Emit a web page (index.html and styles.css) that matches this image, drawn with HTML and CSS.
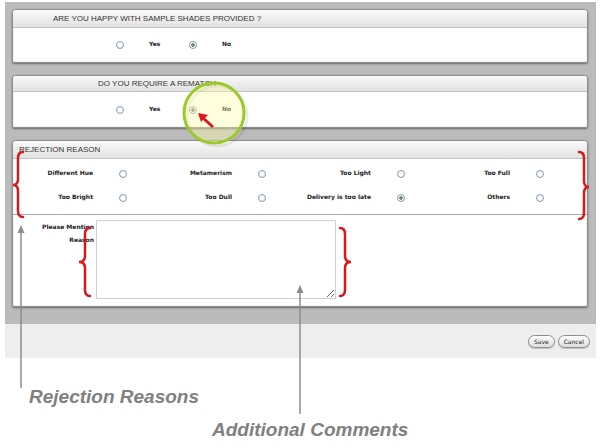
FILE: index.html
```html
<!DOCTYPE html>
<html lang="en">
<head>
  <meta charset="UTF-8"/>
  <title>Shade Approval</title>
  <link rel="stylesheet" href="styles.css">
</head>
<body>

  <div class="screen">
    <!-- SHADES QUESTION -->
    <div class="panel">
      <div class="panel-head"><span class="head-cell">ARE YOU HAPPY WITH SAMPLE SHADES PROVIDED ?</span></div>
      <div class="panel-body yesno">
        <label class="opt"><input type="radio" name="happy"><span>Yes</span></label>
        <label class="opt"><input type="radio" name="happy" checked><span>No</span></label>
      </div>
    </div>

    <!-- REMATCH QUESTION -->
    <div class="panel">
      <div class="panel-head short"><span class="head-cell">DO YOU REQUIRE A REMATCH</span></div>
      <div class="panel-body yesno tall">
        <label class="opt"><input type="radio" name="rematch"><span>Yes</span></label>
        <label class="opt"><input type="radio" name="rematch" checked><span>No</span></label>
      </div>
    </div>

    <!-- REJECTION -->
    <div class="panel">
      <div class="panel-head"><span class="head-left">REJECTION REASON</span></div>
      <div class="reasons">
        <span class="rlabel">Different Hue</span><span class="rcell"><input type="radio" name="reason"></span>
        <span class="rlabel">Metamerism</span><span class="rcell"><input type="radio" name="reason"></span>
        <span class="rlabel">Too Light</span><span class="rcell"><input type="radio" name="reason"></span>
        <span class="rlabel">Too Full</span><span class="rcell"><input type="radio" name="reason"></span>
        <span class="rlabel">Too Bright</span><span class="rcell"><input type="radio" name="reason"></span>
        <span class="rlabel">Too Dull</span><span class="rcell"><input type="radio" name="reason"></span>
        <span class="rlabel">Delivery is too late</span><span class="rcell"><input type="radio" name="reason" checked></span>
        <span class="rlabel">Others</span><span class="rcell"><input type="radio" name="reason"></span>
      </div>
      <div class="comment">
        <label class="clabel" for="reasonText">Please Mention<br>Reason</label>
        <textarea id="reasonText"></textarea>
      </div>
    </div>
  </div>

  <div class="footer">
    <button class="btn">Save</button>
    <button class="btn">Cancel</button>
  </div>

  <div class="notes">
    <div class="note">Rejection Reasons</div>
    <div class="note second">Additional Comments</div>
  </div>

  <!-- callout marks drawn over the form -->
  <svg class="marks" width="600" height="448" viewBox="0 0 600 448">
    <g fill="#8c8c8c" stroke="#8c8c8c" stroke-width="1.5">
      <line x1="21" y1="231" x2="21" y2="388"/>
      <path d="M21 225 L17.5 233 L24.5 233 Z" stroke="none"/>
      <line x1="300" y1="291" x2="300" y2="414"/>
      <path d="M300 285 L296.5 293 L303.5 293 Z" stroke="none"/>
    </g>
    <g fill="none" stroke="#d9181e" stroke-width="2.5" stroke-linecap="round">
      <path d="M23 152 Q18 152 18 158 L18 179 Q18 185 13 185 Q18 185 18 191 L18 211 Q18 217 23 217"/>
      <path d="M579 152 Q584 152 584 158 L584 181 Q584 187 589 187 Q584 187 584 193 L584 213 Q584 219 579 219"/>
      <path d="M90 228 Q85 228 85 234 L85 256 Q85 262 79 262 Q85 262 85 268 L85 290 Q85 296 90 296"/>
      <path d="M340 228 Q345 228 345 234 L345 256 Q345 262 351 262 Q345 262 345 268 L345 290 Q345 296 340 296"/>
    </g>
    <circle cx="217" cy="116" r="30" fill="none" stroke="rgba(0,0,0,0.08)" stroke-width="3"/>
    <circle cx="214" cy="113" r="30" fill="rgba(255,255,170,0.4)" stroke="#9bc92a" stroke-width="3"/>
    <g fill="#d9181e" stroke="#d9181e">
      <line x1="213" y1="127" x2="203" y2="118" stroke-width="3"/>
      <path d="M198 113 L208 115 L201 122 Z" stroke="none"/>
    </g>
  </svg>

</body>
</html>
```

FILE: styles.css
```css
/* RESET */
* {
  margin: 0;
  padding: 0;
  box-sizing: border-box;
}

html, body {
  width: 600px;
  height: 448px;
  background: #fff;
  font-family: 'DejaVu Sans', Verdana, sans-serif;
  color: #222;
  overflow: hidden;
  position: relative;
}

/* SCREEN */
.screen {
  margin: 2px 0 0 5px;
  width: 591px;
  background: #bbbbbb;
  padding: 7px 8px 17px 7px;
  display: flex;
  flex-direction: column;
  gap: 12px;
}

.panel {
  background: #fff;
  border: 1px solid #8d8d8d;
  border-radius: 4px 4px 2px 2px;
  box-shadow: 0 1px 2px rgba(0, 0, 0, 0.45), inset 0 0 0 1px #f4f4f4;
  overflow: hidden;
}

.panel-head {
  height: 18px;
  display: flex;
  align-items: center;
  background: linear-gradient(#fafafa, #e2e2e2);
  border-bottom: 1px solid #c4c4c4;
  font-family: 'Liberation Sans', Arial, sans-serif;
  font-size: 8px;
  color: #333;
}

.panel-head.short {
  height: 16px;
}

.head-cell {
  width: 288px;
  text-align: center;
}

.head-left {
  padding-left: 6px;
}

/* YES / NO */
.yesno {
  height: 34px;
  display: flex;
  align-items: center;
  padding-left: 103px;
}

.yesno.tall {
  height: 35px;
}

.opt {
  width: 73px;
  display: flex;
  align-items: center;
  font-size: 6px;
  font-weight: bold;
}

.opt span {
  margin-left: 25px;
  margin-top: -3px;
}

/* RADIOS */
input[type="radio"] {
  appearance: none;
  -webkit-appearance: none;
  width: 8px;
  height: 8px;
  border-radius: 50%;
  border: 1px solid #8a9cb3;
  background: radial-gradient(circle, #ffffff 40%, #dfe6ee 100%);
  display: block;
}

input[type="radio"]:checked {
  background: radial-gradient(circle, #6f8a6f 0 1.5px, #ffffff 2px 45%, #dfe6ee 100%);
}

/* REJECTION GRID */
.reasons {
  display: grid;
  grid-template-columns: repeat(4, 80px 59px);
  grid-auto-rows: 24px;
  align-items: center;
  padding: 3px 0 4px;
  border-bottom: 1px solid #a8a8a8;
  font-size: 6px;
  font-weight: bold;
}

.rlabel {
  text-align: right;
  white-space: nowrap;
  margin-top: -3px;
}

.rcell input {
  margin-left: 26px;
}

/* COMMENT */
.comment {
  display: flex;
  align-items: flex-start;
  padding: 5px 0 7px;
}

.clabel {
  width: 81px;
  text-align: right;
  font-size: 6px;
  font-weight: bold;
  line-height: 13px;
}

textarea {
  margin-left: 2px;
  width: 240px;
  height: 79px;
  border: 1px solid #c9d2dc;
  resize: both;
  background: #fff;
}

/* FOOTER */
.footer {
  margin-left: 5px;
  width: 591px;
  height: 34px;
  background: #eeeeee;
  display: flex;
  align-items: center;
  justify-content: flex-end;
  gap: 3px;
  padding-right: 6px;
}

.btn {
  height: 13px;
  padding: 0 5px;
  border: 1px solid #8f8f8f;
  border-radius: 7px;
  background: linear-gradient(#ffffff, #dcdcdc);
  box-shadow: 0 1px 1px rgba(0, 0, 0, 0.2);
  font-family: 'DejaVu Sans', Verdana, sans-serif;
  font-size: 6px;
  color: #222;
}

/* NOTES */
.notes {
  padding-top: 28px;
}

.note {
  font-family: 'Liberation Sans', Arial, sans-serif;
  font-size: 19px;
  font-weight: bold;
  font-style: italic;
  line-height: 22px;
  color: #808080;
  padding-left: 29px;
}

.note.second {
  margin-top: 11px;
  padding-left: 212px;
}

.marks {
  position: absolute;
  left: 0;
  top: 0;
  pointer-events: none;
}
```
